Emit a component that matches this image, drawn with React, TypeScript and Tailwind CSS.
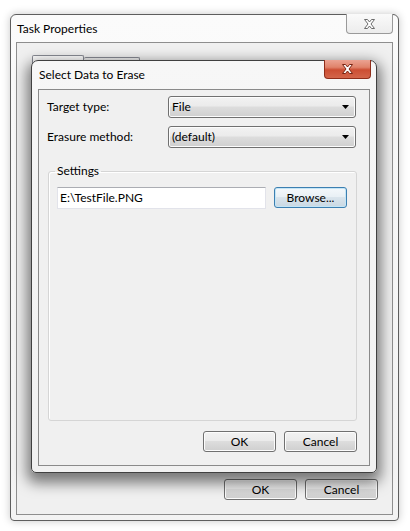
import React from 'react';

const font = "font-['Lato','Open_Sans',sans-serif]";

// Caption close glyph, outlined "X" as drawn by the Windows 7 basic theme
const CloseGlyph = ({ stroke }: { stroke: string }) => (
    <svg width="13" height="10" viewBox="0 0 13 10">
        <path
            d="M1.5 0.5 H4.5 L6.5 3 L8.5 0.5 H11.5 L8 5 L11.5 9.5 H8.5 L6.5 7 L4.5 9.5 H1.5 L5 5 Z"
            fill="#ffffff"
            stroke={stroke}
            strokeWidth="1"
            strokeLinejoin="round"
        />
    </svg>
);

const Button = ({ children, focused = false }: { children: React.ReactNode; focused?: boolean }) => (
    <button
        className={`h-[21px] w-[73px] rounded-[3px] border text-[12px] leading-none text-black ${
            focused
                ? 'border-[#3c7fb1] bg-[linear-gradient(#f4f8fb_0%,#e9f0f5_45%,#d9e4ec_50%,#c9d8e3_100%)] shadow-[inset_0_0_0_1px_#c4e5f6]'
                : 'border-[#707070] bg-[linear-gradient(#f2f2f2_0%,#ebebeb_45%,#dddddd_50%,#cfcfcf_100%)] shadow-[inset_0_0_0_1px_#fcfcfc]'
        }`}
    >
        {children}
    </button>
);

const Combo = ({ value }: { value: string }) => (
    <div className="flex h-[22px] w-[188px] items-center rounded-[3px] border border-[#707070] bg-[linear-gradient(#f2f2f2_0%,#ebebeb_45%,#dddddd_50%,#cfcfcf_100%)] pl-[3px] pr-[6px] shadow-[inset_0_0_0_1px_#fcfcfc]">
        <span className="flex-1 text-[12px] text-black">{value}</span>
        <svg width="7" height="4" viewBox="0 0 7 4">
            <path d="M0 0 H7 L3.5 4 Z" fill="#000" />
        </svg>
    </div>
);

export default function App() {
    return (
        <div className={`relative h-[531px] w-[410px] overflow-hidden bg-white ${font}`}>
            {/* Task Properties (inactive, behind) */}
            <div className="absolute left-[10px] top-[14px] flex h-[507px] w-[389px] flex-col rounded-t-[6px] rounded-b-[4px] border border-[#5e5e5e] bg-[linear-gradient(#fbfbfb,#f3f3f3)] px-[5px] pb-[5px] shadow-[0_0_8px_rgba(0,0,0,0.22)]">
                <div className="flex h-[27px] items-start">
                    <span className="self-center pl-[1px] text-[12px] text-black">Task Properties</span>
                    <div className="-mt-[1px] ml-auto flex h-[20px] w-[47px] items-center justify-center rounded-b-[4px] border border-t-0 border-[#9a9a9a] bg-[linear-gradient(#fafafa,#ececec)]">
                        <CloseGlyph stroke="#6b6b6b" />
                    </div>
                </div>

                <div className="flex flex-1 flex-col border border-[#8e8e8e] bg-[#f0f0f0]">
                    {/* tab strip, mostly hidden by the dialog */}
                    <div className="mt-[12px] ml-[15px] flex items-end">
                        <div className="h-[20px] w-[52px] rounded-t-[2px] border border-b-0 border-[#898c95] bg-white" />
                        <div className="h-[18px] w-[56px] rounded-t-[2px] border border-b-0 border-l-0 border-[#898c95] bg-[linear-gradient(#f2f2f2,#e3e3e3)]" />
                    </div>
                    <div className="flex-1" />

                    <div className="flex justify-end gap-[8px] pt-[9px] pb-[14px] pr-[14px]">
                        <Button>OK</Button>
                        <Button>Cancel</Button>
                    </div>
                </div>
            </div>

            {/* Select Data to Erase (active dialog) */}
            <div className="absolute left-[31px] top-[60px] flex h-[413px] w-[346px] flex-col rounded-t-[7px] rounded-b-[5px] border border-[#404040] bg-[linear-gradient(#f7f7f7,#f1f1f1)] px-[6px] pb-[6px] shadow-[0_6px_14px_4px_rgba(0,0,0,0.5)]">
                <div className="flex h-[28px] items-start">
                    <span className="self-center pl-[1px] text-[12px] text-black">Select Data to Erase</span>
                    <div className="-mt-[1px] ml-auto -mr-[1px] flex h-[19px] w-[47px] items-center justify-center rounded-b-[4px] border border-t-0 border-[#8f2d1a] bg-[linear-gradient(#eba392_0%,#e0836b_40%,#cc4e33_55%,#d3654a_100%)]">
                        <CloseGlyph stroke="#7a2412" />
                    </div>
                </div>

                <div className="flex flex-1 flex-col border border-[#8a8a8a] bg-[#f0f0f0] pt-[6px] pb-[13px] pl-[8px] pr-[12px]">
                    <div className="flex items-center">
                        <span className="w-[121px] text-[12px] text-black">Target type:</span>
                        <Combo value="File" />
                    </div>
                    <div className="mt-[8px] flex items-center">
                        <span className="w-[121px] text-[12px] text-black">Erasure method:</span>
                        <Combo value="(default)" />
                    </div>

                    <fieldset className="mt-[15px] ml-[1px] flex-1 rounded-[3px] border border-[#d5d5d5] pl-[8px] pr-[9px] pt-[8px] shadow-[inset_1px_1px_0_#ffffff]">
                        <legend className="-ml-[2px] px-[2px] text-[12px] leading-[16px] text-black">Settings</legend>
                        <div className="flex items-start gap-[8px]">
                            <div className="flex h-[22px] flex-1 items-center border border-[#e2e3ea] border-t-[#abadb3] bg-white pl-[2px] text-[12px] text-black">
                                E:\TestFile.PNG
                            </div>
                            <Button focused>Browse...</Button>
                        </div>
                    </fieldset>

                    <div className="mt-[10px] flex justify-end gap-[8px]">
                        <Button>OK</Button>
                        <Button>Cancel</Button>
                    </div>
                </div>
            </div>
        </div>
    );
}
